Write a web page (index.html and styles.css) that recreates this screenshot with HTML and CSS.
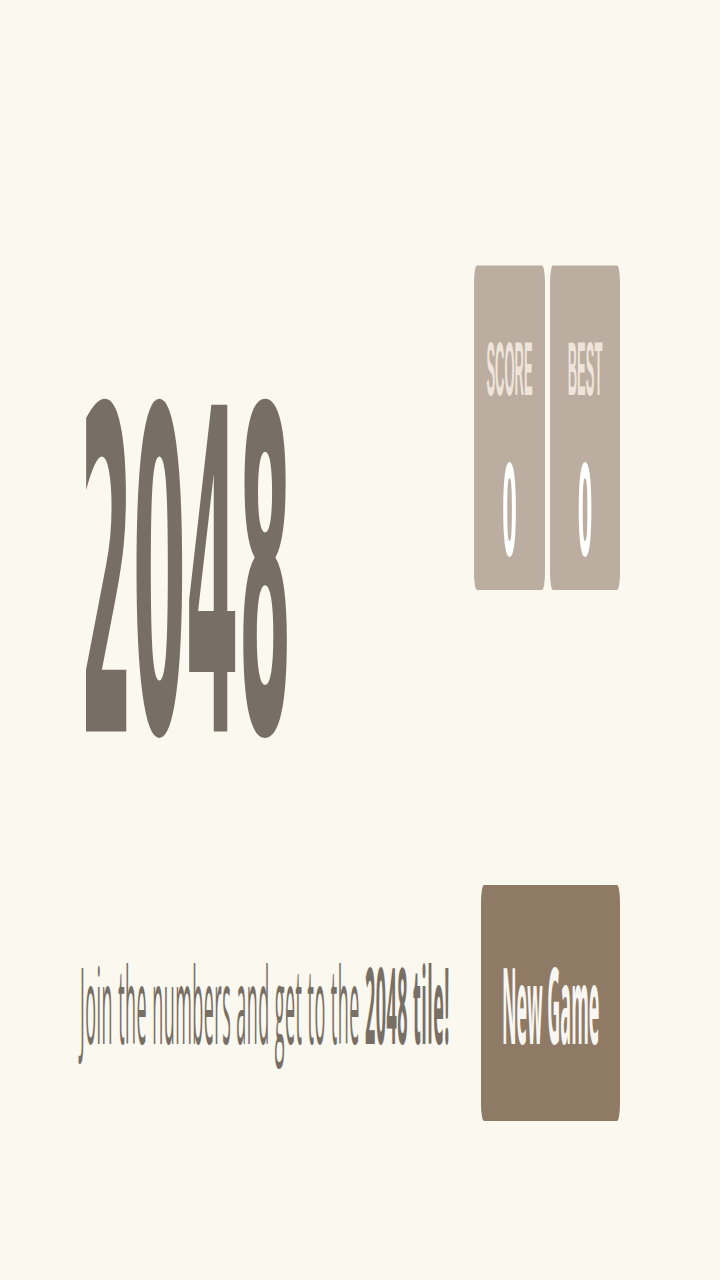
FILE: index.html
```html
<!DOCTYPE html>
<html lang="en">
<head>
    <meta charset="UTF-8">
    <meta name="viewport" content="width=device-width, initial-scale=1.0">
    <title>2048</title>
    <link rel="stylesheet" href="styles.css">
</head>
<body>
    <div class="container">
        <div class="heading">
            <h1 class="title">2048</h1>
            <div class="scores">
                <div class="score-box">
                    <div class="score-label">Score</div>
                    <div class="score-value">0</div>
                </div>
                <div class="score-box">
                    <div class="score-label">Best</div>
                    <div class="score-value">0</div>
                </div>
            </div>
        </div>

        <div class="above-game">
            <p class="intro">Join the numbers and get to the <strong>2048 tile!</strong></p>
            <a class="restart-button" href="#">New Game</a>
        </div>
    </div>
</body>
</html>
```

FILE: styles.css
```css
html, body {
    margin: 0;
    padding: 0;
    height: 100%;
    overflow: hidden;
}

body {
    background-color: #faf8ef;
    color: #776e65;
    font-family: "Open Sans", "Liberation Sans", Arial, sans-serif;
    font-size: 18px;
}

/* the whole header is drawn tall: stretched vertically */
.container {
    width: 540px;
    padding: 45px 0 0 80px;
    transform: scaleY(5.9);
    transform-origin: top left;
}

.heading {
    display: flex;
    justify-content: space-between;
    align-items: flex-start;
}

.title {
    font-family: "DejaVu Sans", sans-serif;
    font-size: 76px;
    font-weight: bold;
    line-height: 76px;
    margin: 15px 0 0 0;
    color: #776e65;
}

.scores {
    display: flex;
    gap: 5px;
}

.score-box {
    width: 71px;
    height: 55px;
    box-sizing: border-box;
    padding-top: 10.5px;
    background-color: #bbada0;
    border-radius: 3px;
    text-align: center;
}

.score-box + .score-box {
    width: 70px;
}

.score-label {
    font-family: "Liberation Sans", Arial, sans-serif;
    font-size: 13px;
    line-height: 13px;
    font-weight: bold;
    text-transform: uppercase;
    color: #eee4da;
}

.score-value {
    font-family: "DejaVu Sans", sans-serif;
    font-size: 21px;
    line-height: 21px;
    font-weight: bold;
    color: #ffffff;
    margin-top: 8px;
}

.above-game {
    display: flex;
    justify-content: space-between;
    align-items: center;
    margin-top: 13.5px;
}

.intro {
    margin: 0;
    line-height: 40px;
    letter-spacing: 0.45px;
}

.intro strong {
    font-weight: bold;
}

.restart-button {
    display: block;
    height: 40px;
    line-height: 40px;
    padding: 0 20.5px;
    background-color: #8f7a66;
    border-radius: 3px;
    color: #f9f6f2;
    font-weight: bold;
    text-decoration: none;
}
```
